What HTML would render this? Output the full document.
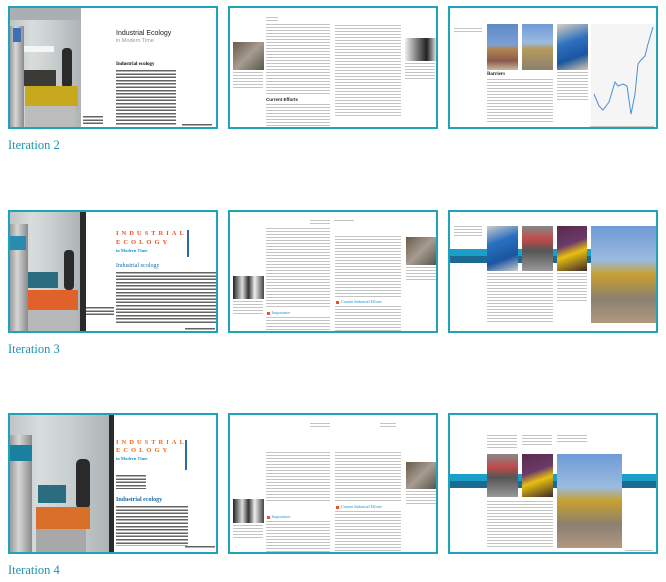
<!DOCTYPE html>
<html><head><meta charset="utf-8"><style>
*{margin:0;padding:0;box-sizing:border-box}
body{width:666px;height:582px;background:#fff;position:relative;overflow:hidden;font-family:"Liberation Serif",serif}
.a{position:absolute}
.f{position:absolute;border:2px solid #1ea3b9;background:#fff;overflow:hidden}
.lbl{position:absolute;left:8px;font-size:12.5px;color:#1a93b0;font-family:"Liberation Serif",serif}
.t{position:absolute;background:repeating-linear-gradient(#8a8a8a 0 1px,transparent 1px 3px);opacity:.5}
.td{position:absolute;background:repeating-linear-gradient(#222 0 1.5px,transparent 1.5px 3.3px);opacity:.7}
.ph{position:absolute}
.photo1{background:linear-gradient(90deg,#bfc4c6 0,#d8dcdc 30%,#c9cfd0 60%,#aeb4b6 100%)}
.pipe{position:absolute;background:linear-gradient(90deg,#9a9a9a,#d6d6d6 40%,#8a8a8a)}
</style></head><body>

<!-- ROW 1 -->
<div class="f" style="left:8px;top:6px;width:210px;height:123px">
  <div class="ph photo1" style="left:0;top:0;width:71px;height:119px"></div>
  <div class="ph" style="left:0;top:0;width:71px;height:12px;background:#a9afb2"></div>
  <div class="ph" style="left:14px;top:38px;width:30px;height:6px;background:#f4f6f4"></div>
  <div class="pipe" style="left:0;top:18px;width:14px;height:101px"></div>
  <div class="ph" style="left:3px;top:20px;width:8px;height:14px;background:#3d6fb5"></div>
  <div class="ph" style="left:52px;top:40px;width:10px;height:40px;background:#2a2a2a;border-radius:4px"></div>
  <div class="ph" style="left:14px;top:62px;width:32px;height:16px;background:#3b3a36"></div>
  <div class="ph" style="left:15px;top:78px;width:53px;height:20px;background:#c8a81c"></div>
  <div class="ph" style="left:15px;top:98px;width:50px;height:21px;background:#bcbcbc"></div>
  <div class="a" style="left:106px;top:22px;font-family:'Liberation Sans',sans-serif;font-size:7px;color:#222">Industrial Ecology</div>
  <div class="a" style="left:106px;top:30px;font-family:'Liberation Sans',sans-serif;font-size:5.5px;color:#999">in Modern Time</div>
  <div class="a" style="left:106px;top:54px;font-size:5px;color:#111;font-weight:bold">Industrial ecology</div>
  <div class="td" style="left:106px;top:62px;width:60px;height:56px"></div>
  <div class="td" style="left:73px;top:108px;width:20px;height:8px"></div>
  <div class="td" style="left:172px;top:116px;width:30px;height:2px"></div>
</div>
<div class="f" style="left:228px;top:6px;width:210px;height:123px">
  <div class="t" style="left:36px;top:9px;width:12px;height:4px"></div>
  <div class="t" style="left:36px;top:16px;width:64px;height:70px"></div>
  <div class="ph" style="left:3px;top:34px;width:31px;height:28px;background:linear-gradient(135deg,#6a5a4a,#a79c90 50%,#5a5650)"></div>
  <div class="t" style="left:3px;top:64px;width:30px;height:16px"></div>
  <div class="a" style="left:36px;top:89px;font-family:'Liberation Sans',sans-serif;font-size:4.5px;font-weight:bold;color:#222">Current Efforts</div>
  <div class="t" style="left:36px;top:96px;width:64px;height:25px"></div>
  <div class="t" style="left:105px;top:17px;width:66px;height:92px"></div>
  <div class="ph" style="left:175px;top:30px;width:31px;height:23px;background:linear-gradient(90deg,#eee,#777 40%,#222 70%,#ddd)"></div>
  <div class="t" style="left:175px;top:55px;width:30px;height:16px"></div>
</div>
<div class="f" style="left:448px;top:6px;width:210px;height:123px">
  <div class="t" style="left:4px;top:20px;width:28px;height:6px"></div>
  <div class="ph" style="left:37px;top:16px;width:31px;height:46px;background:linear-gradient(#5d8ac8 0,#7aa0d4 45%,#b3844a 55%,#8a5a50 80%,#c9b79a)"></div>
  <div class="ph" style="left:72px;top:16px;width:31px;height:46px;background:linear-gradient(#6f9ad6 0,#9bbbe0 40%,#b49a5a 55%,#8b8070 100%)"></div>
  <div class="ph" style="left:107px;top:16px;width:31px;height:46px;background:linear-gradient(160deg,#d8d0c0 0,#2e70c0 40%,#1b55a0 70%,#d8c8a8)"></div>
  <div class="a" style="left:37px;top:64px;font-size:5px;font-weight:bold;color:#222">Barriers</div>
  <div class="t" style="left:37px;top:71px;width:66px;height:45px"></div>
  <div class="t" style="left:107px;top:64px;width:31px;height:30px"></div>
  <div class="ph" style="left:141px;top:16px;width:65px;height:102px;background:#f5f5f5"></div>
  <svg class="a" style="left:141px;top:16px" width="65" height="102" viewBox="0 0 65 102"><polyline fill="none" stroke="#4a8fd8" stroke-width="1" points="3,70 8,82 12,86 18,78 24,58 27,62 32,60 36,62 40,90 44,70 47,40 50,36 54,32 57,20 62,3"/></svg>
  <div class="t" style="left:140px;top:118px;width:64px;height:2px"></div>
</div>
<div class="lbl" style="top:138px">Iteration 2</div>

<!-- ROW 2 -->
<div class="f" style="left:8px;top:210px;width:210px;height:123px">
  <div class="ph photo1" style="left:0;top:0;width:70px;height:119px"></div>
  <div class="ph" style="left:70px;top:0;width:6px;height:119px;background:#2a2a2a"></div>
  <div class="pipe" style="left:0;top:12px;width:18px;height:107px"></div>
  <div class="ph" style="left:0;top:24px;width:16px;height:14px;background:#2a8ab0"></div>
  <div class="ph" style="left:54px;top:38px;width:10px;height:40px;background:#2a2a2a;border-radius:4px"></div>
  <div class="ph" style="left:18px;top:60px;width:30px;height:16px;background:#2a6c80"></div>
  <div class="ph" style="left:18px;top:78px;width:50px;height:20px;background:#e0622a"></div>
  <div class="ph" style="left:18px;top:98px;width:48px;height:21px;background:#b8b8b8"></div>
  <div class="a" style="left:106px;top:18px;font-size:6.5px;letter-spacing:3px;color:#e8532a;font-weight:bold">INDUSTRIAL</div>
  <div class="a" style="left:106px;top:27px;font-size:6.5px;letter-spacing:3px;color:#e8532a;font-weight:bold">ECOLOGY</div>
  <div class="a" style="left:106px;top:36px;font-size:4.5px;color:#1a93c8;font-weight:bold">in Modern Time</div>
  <div class="ph" style="left:177px;top:18px;width:2px;height:27px;background:#2a6ca8"></div>
  <div class="a" style="left:106px;top:51px;font-size:6px;color:#1a6ca8">Industrial ecology</div>
  <div class="td" style="left:106px;top:60px;width:100px;height:52px"></div>
  <div class="td" style="left:76px;top:95px;width:28px;height:10px"></div>
  <div class="td" style="left:175px;top:116px;width:30px;height:2px"></div>
</div>
<div class="f" style="left:228px;top:210px;width:210px;height:123px">
  <div class="t" style="left:80px;top:8px;width:20px;height:4px"></div>
  <div class="t" style="left:36px;top:16px;width:64px;height:80px"></div>
  <div class="ph" style="left:3px;top:64px;width:31px;height:23px;background:linear-gradient(90deg,#222,#ddd 30%,#333 50%,#eee 70%,#444)"></div>
  <div class="t" style="left:3px;top:89px;width:30px;height:14px"></div>
  <div class="ph" style="left:37px;top:100px;width:3px;height:3px;background:#e8532a"></div>
  <div class="a" style="left:42px;top:98px;font-size:4px;color:#1a93c8">Importance</div>
  <div class="t" style="left:36px;top:105px;width:64px;height:14px"></div>
  <div class="t" style="left:104px;top:8px;width:20px;height:3px"></div>
  <div class="t" style="left:105px;top:24px;width:66px;height:62px"></div>
  <div class="ph" style="left:176px;top:25px;width:30px;height:28px;background:linear-gradient(135deg,#6a5a4a,#a79c90 50%,#5a5650)"></div>
  <div class="t" style="left:176px;top:55px;width:30px;height:14px"></div>
  <div class="ph" style="left:106px;top:89px;width:3px;height:3px;background:#e8532a"></div>
  <div class="a" style="left:111px;top:87px;font-size:4px;color:#1a93c8">Current Industrial Efforts</div>
  <div class="t" style="left:105px;top:94px;width:66px;height:25px"></div>
</div>
<div class="f" style="left:448px;top:210px;width:210px;height:123px">
  <div class="ph" style="left:0;top:37px;width:206px;height:7px;background:#1aa0c8"></div>
  <div class="ph" style="left:0;top:44px;width:206px;height:7px;background:#1a6a94"></div>
  <div class="t" style="left:4px;top:14px;width:28px;height:10px"></div>
  <div class="ph" style="left:37px;top:14px;width:31px;height:45px;background:linear-gradient(160deg,#ccc,#2a70c0 35%,#1b55a0 70%,#ccc)"></div>
  <div class="ph" style="left:72px;top:14px;width:31px;height:45px;background:linear-gradient(#888,#c04a4a 30%,#555 55%,#999)"></div>
  <div class="ph" style="left:107px;top:14px;width:30px;height:45px;background:linear-gradient(160deg,#5a2a4a,#6a3a6a 40%,#e8c010 60%,#3a2a2a)"></div>
  <div class="ph" style="left:141px;top:14px;width:65px;height:97px;background:linear-gradient(#6f9ad6 0,#9bbbe0 35%,#c8a030 50%,#8b8070 75%,#b09880)"></div>
  <div class="t" style="left:37px;top:61px;width:66px;height:50px"></div>
  <div class="t" style="left:107px;top:61px;width:30px;height:30px"></div>
</div>
<div class="lbl" style="top:342px">Iteration 3</div>

<!-- ROW 3 -->
<div class="f" style="left:8px;top:413px;width:210px;height:141px">
  <div class="ph photo1" style="left:0;top:0;width:99px;height:137px"></div>
  <div class="ph" style="left:99px;top:0;width:5px;height:137px;background:#2a2a2a"></div>
  <div class="pipe" style="left:0;top:20px;width:22px;height:117px"></div>
  <div class="ph" style="left:0;top:30px;width:22px;height:16px;background:#1a80a0"></div>
  <div class="ph" style="left:66px;top:44px;width:14px;height:50px;background:#2a2a2a;border-radius:5px"></div>
  <div class="ph" style="left:28px;top:70px;width:28px;height:18px;background:#2a6c80"></div>
  <div class="ph" style="left:26px;top:92px;width:54px;height:22px;background:#d8702a"></div>
  <div class="ph" style="left:26px;top:114px;width:50px;height:23px;background:#a8a8a8"></div>
  <div class="a" style="left:106px;top:24px;font-size:6.5px;letter-spacing:3px;color:#f06a1a;font-weight:bold">INDUSTRIAL</div>
  <div class="a" style="left:106px;top:32px;font-size:6.5px;letter-spacing:3px;color:#f06a1a;font-weight:bold">ECOLOGY</div>
  <div class="a" style="left:106px;top:41px;font-size:4.5px;color:#1a93c8;font-weight:bold">in Modern Time</div>
  <div class="ph" style="left:175px;top:25px;width:2px;height:30px;background:#2a6ca8"></div>
  <div class="td" style="left:106px;top:60px;width:30px;height:14px"></div>
  <div class="a" style="left:106px;top:82px;font-size:6px;color:#1a6ca8;font-weight:bold">Industrial ecology</div>
  <div class="td" style="left:106px;top:91px;width:72px;height:40px"></div>
  <div class="td" style="left:175px;top:131px;width:30px;height:2px"></div>
</div>
<div class="f" style="left:228px;top:413px;width:210px;height:141px">
  <div class="t" style="left:80px;top:8px;width:20px;height:5px"></div>
  <div class="t" style="left:36px;top:37px;width:64px;height:50px"></div>
  <div class="ph" style="left:3px;top:84px;width:31px;height:24px;background:linear-gradient(90deg,#222,#ddd 30%,#333 50%,#eee 70%,#444)"></div>
  <div class="t" style="left:3px;top:110px;width:30px;height:14px"></div>
  <div class="ph" style="left:37px;top:101px;width:3px;height:3px;background:#e8532a"></div>
  <div class="a" style="left:42px;top:99px;font-size:4px;color:#1a93c8">Importance</div>
  <div class="t" style="left:36px;top:106px;width:64px;height:33px"></div>
  <div class="t" style="left:150px;top:8px;width:16px;height:6px"></div>
  <div class="t" style="left:105px;top:37px;width:66px;height:50px"></div>
  <div class="ph" style="left:176px;top:47px;width:30px;height:27px;background:linear-gradient(135deg,#6a5a4a,#a79c90 50%,#5a5650)"></div>
  <div class="t" style="left:176px;top:76px;width:30px;height:14px"></div>
  <div class="ph" style="left:106px;top:91px;width:3px;height:3px;background:#e8532a"></div>
  <div class="a" style="left:111px;top:89px;font-size:4px;color:#1a93c8">Current Industrial Efforts</div>
  <div class="t" style="left:105px;top:96px;width:66px;height:40px"></div>
</div>
<div class="f" style="left:448px;top:413px;width:210px;height:141px">
  <div class="ph" style="left:0;top:59px;width:206px;height:7px;background:#1aa0c8"></div>
  <div class="ph" style="left:0;top:66px;width:206px;height:7px;background:#1a6a94"></div>
  <div class="t" style="left:37px;top:20px;width:30px;height:14px"></div>
  <div class="t" style="left:72px;top:20px;width:30px;height:10px"></div>
  <div class="t" style="left:107px;top:20px;width:30px;height:8px"></div>
  <div class="ph" style="left:37px;top:39px;width:31px;height:43px;background:linear-gradient(#888,#c04a4a 30%,#555 55%,#999)"></div>
  <div class="ph" style="left:72px;top:39px;width:31px;height:43px;background:linear-gradient(160deg,#5a2a4a,#6a3a6a 40%,#e8c010 60%,#3a2a2a)"></div>
  <div class="ph" style="left:107px;top:39px;width:65px;height:94px;background:linear-gradient(#6f9ad6 0,#9bbbe0 35%,#c8a030 50%,#8b8070 75%,#b09880)"></div>
  <div class="t" style="left:37px;top:86px;width:66px;height:46px"></div>
  <div class="t" style="left:175px;top:135px;width:28px;height:2px"></div>
</div>
<div class="lbl" style="top:563px">Iteration 4</div>
</body></html>
